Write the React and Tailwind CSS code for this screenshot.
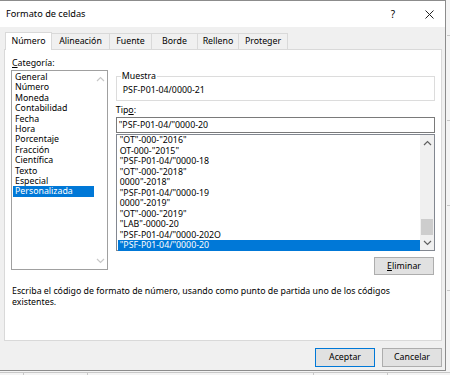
import React from 'react';

const CATEGORIAS = [
  'General', 'Número', 'Moneda', 'Contabilidad', 'Fecha', 'Hora',
  'Porcentaje', 'Fracción', 'Científica', 'Texto', 'Especial', 'Personalizada',
];

const TIPOS = [
  '"OT"-000-"2016"',
  'OT-000-"2015"',
  '"PSF-P01-04/"0000-18',
  '"OT"-000-"2018"',
  '0000"-2018"',
  '"PSF-P01-04/"0000-19',
  '0000"-2019"',
  '"OT"-000-"2019"',
  '"LAB"-0000-20',
  '"PSF-P01-04/"0000-202O',
  '"PSF-P01-04/"0000-20',
];

const TABS = [
  { label: 'Alineación', w: 'w-[58px]' },
  { label: 'Fuente', w: 'w-[42px]' },
  { label: 'Borde', w: 'w-[46px]' },
  { label: 'Relleno', w: 'w-[41px]' },
  { label: 'Proteger', w: 'w-[49px]' },
];

function Chevron({ up, color = '#606060' }) {
  return (
    <svg width="9" height="6" viewBox="0 0 9 6">
      <path
        d={up ? 'M1 5 L4.5 1.5 L8 5' : 'M1 1 L4.5 4.5 L8 1'}
        fill="none"
        stroke={color}
        strokeWidth="1.2"
      />
    </svg>
  );
}

export default function App() {
  return (
    <div className="w-[450px] h-[375px] overflow-hidden bg-[#f4f4f4] font-['Noto_Sans',sans-serif] text-[8.8px] text-black relative">
      {/* hojas de cálculo detrás del diálogo */}
      <div className="absolute left-0 right-0 top-[372px] h-px bg-[#c8c8c8]" />
      <div className="absolute top-[372px] bottom-0 left-[23px] w-px bg-[#c8c8c8]" />
      <div className="absolute top-[372px] bottom-0 left-[87px] w-px bg-[#c8c8c8]" />
      <div className="absolute top-[372px] bottom-0 left-[313px] w-px bg-[#c8c8c8]" />
      <div className="absolute top-[372px] bottom-0 left-[387px] w-px bg-[#c8c8c8]" />
      <div className="absolute left-[447px] right-0 top-[35px] h-px bg-[#c8c8c8]" />
      <div className="absolute left-[447px] right-0 top-[120px] h-px bg-[#c8c8c8]" />
      <div className="absolute left-[447px] right-0 top-[205px] h-px bg-[#c8c8c8]" />
      <div className="absolute left-[447px] right-0 top-[290px] h-px bg-[#c8c8c8]" />

      <div className="w-[446px] h-[371px] flex flex-col border-t border-r border-b border-[#8c8c8c] relative">
        {/* barra de título */}
        <div className="h-[26px] bg-white flex items-center pl-[6px] shrink-0">
          <span className="text-[9.2px] leading-none">Formato de celdas</span>
          <span className="ml-auto text-[10px] leading-none mr-[30px]">?</span>
          <svg width="9" height="9" viewBox="0 0 9 9" className="mr-[11px]">
            <path d="M0.5 0.5 L8.5 8.5 M8.5 0.5 L0.5 8.5" stroke="#222" strokeWidth="1" />
          </svg>
        </div>

        <div className="flex-1 bg-[#f0f0f0] flex flex-col pt-[5px]">
          {/* pestañas */}
          <div className="h-[17px] pl-[5px] flex items-end">
            <div className="w-[47px] h-[18px] -mb-px relative z-10 bg-white border-t border-l border-r border-[#d9d9d9] flex items-center justify-center leading-none">
              Número
            </div>
            {TABS.map(t => (
              <div
                key={t.label}
                className={`${t.w} h-[16px] border-t border-r border-[#d9d9d9] flex items-center justify-center leading-none`}
              >
                {t.label}
              </div>
            ))}
          </div>

          {/* panel */}
          <div className="ml-[4px] w-[438px] h-[292px] bg-white border border-[#d9d9d9] pt-[6px] px-[6px]">
            <div className="flex gap-[8px]">
              <div className="w-[97px] flex flex-col">
                <div className="h-[14px] leading-[14px] pl-px">
                  <span className="underline">C</span>ategoría:
                </div>
                <div className="h-[200px] border border-[#a0a0a0] flex">
                  <div className="flex-1 pt-[1px] pl-px">
                    {CATEGORIAS.map(c => (
                      <div
                        key={c}
                        className={`h-[10.4px] leading-[10.4px] pl-[2px] whitespace-nowrap ${c === 'Personalizada' ? 'bg-[#0078d7] text-white' : ''}`}
                      >
                        {c}
                      </div>
                    ))}
                  </div>
                  <div className="w-[13px] flex flex-col justify-between items-center py-[5px]">
                    <Chevron up color="#c8c8c8" />
                    <Chevron color="#c8c8c8" />
                  </div>
                </div>
              </div>

              <div className="w-[320px] flex flex-col">
                <div className="mt-[20px] h-[25px] border border-[#dcdcdc] relative pt-[8px] pl-[6px] leading-[11px]">
                  <span className="absolute left-[4px] top-[-6px] px-px bg-white leading-[11px]">Muestra</span>
                  PSF-P01-04/0000-21
                </div>
                <div className="mt-[3px] h-[13px] leading-[13px]">
                  Tip<span className="underline">o</span>:
                </div>
                <div className="h-[16px] border border-[#7a7a7a] pl-[2px] leading-[14px] whitespace-nowrap">
                  "PSF-P01-04/"0000-20
                </div>
                <div className="mt-[1px] h-[117px] border border-[#828790] flex">
                  <div className="flex-1 pl-px">
                    {TIPOS.map((t, i) => (
                      <div
                        key={i}
                        className={`h-[10.5px] leading-[10.5px] pl-[2px] whitespace-nowrap ${i === TIPOS.length - 1 ? 'bg-[#0078d7] text-white' : ''}`}
                      >
                        {t}
                      </div>
                    ))}
                  </div>
                  <div className="w-[14px] bg-[#f0f0f0] flex flex-col">
                    <div className="h-[16px] flex items-center justify-center">
                      <Chevron up />
                    </div>
                    <div className="flex-1 flex flex-col justify-end px-px">
                      <div className="h-[16px] mb-px bg-[#cdcdcd]" />
                    </div>
                    <div className="h-[14px] flex items-center justify-center">
                      <Chevron />
                    </div>
                  </div>
                </div>
                <div className="self-end mr-px mt-[6px] w-[60px] h-[18px] bg-[#e1e1e1] border border-[#adadad] flex items-center justify-center leading-none">
                  <span className="underline">E</span>liminar
                </div>
              </div>
            </div>

            <div className="mt-[11px] leading-[10.5px] pl-px whitespace-nowrap">
              Escriba el código de formato de número, usando como punto de partida uno de los códigos
              <br />
              existentes.
            </div>
          </div>

          {/* botones */}
          <div className="mt-[7px] flex justify-end gap-[7px] pr-[3px]">
            <div className="w-[60px] h-[19px] bg-[#e1e1e1] border border-[#0078d7] flex items-center justify-center leading-none">
              Aceptar
            </div>
            <div className="w-[60px] h-[19px] bg-[#e1e1e1] border border-[#adadad] flex items-center justify-center leading-none">
              Cancelar
            </div>
          </div>
        </div>
      </div>
    </div>
  );
}
